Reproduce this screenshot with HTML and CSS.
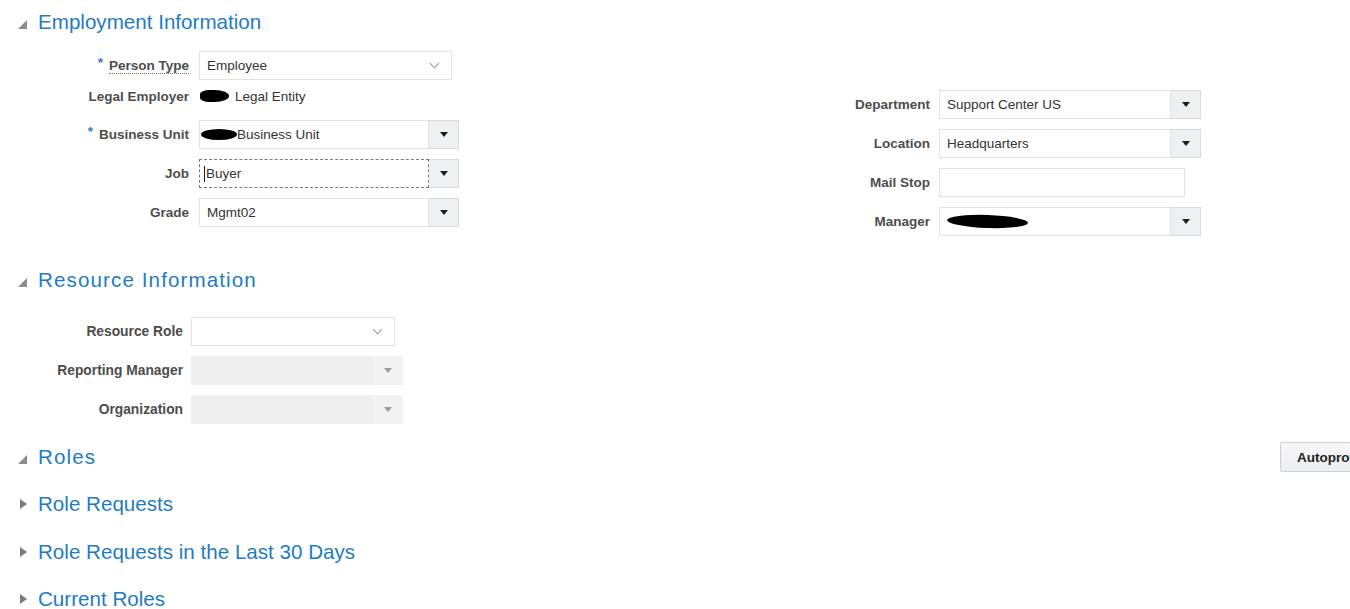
FILE: index.html
```html
<!DOCTYPE html>
<html>

<head>
    <meta charset="UTF-8">
    <title>Employment Information</title>
    <link rel="stylesheet" href="styles.css">
</head>

<body>
    <div class="section-head head-employment">
        <span class="tri-box"><span class="tri-open"></span></span>
        <span class="head-text">Employment Information</span>
    </div>

    <div class="employment">
        <div class="form form-left">
            <div class="row row-person">
                <div class="lbl"><span class="req">*</span><span class="help">Person Type</span></div>
                <div class="select w-person"><span class="val">Employee</span><span class="chev"></span></div>
            </div>
            <div class="row row-text">
                <div class="lbl">Legal Employer</div>
                <div class="ro-value"><span class="blob blob-legal"></span>Legal Entity</div>
            </div>
            <div class="row">
                <div class="lbl"><span class="req">*</span>Business Unit</div>
                <div class="combo">
                    <div class="input w-combo"><span class="blob blob-bu"></span>Business Unit</div>
                    <div class="drop"><span class="arrow"></span></div>
                </div>
            </div>
            <div class="row">
                <div class="lbl">Job</div>
                <div class="combo">
                    <div class="input w-combo focus"><span class="caret"></span>Buyer</div>
                    <div class="drop"><span class="arrow"></span></div>
                </div>
            </div>
            <div class="row">
                <div class="lbl">Grade</div>
                <div class="combo">
                    <div class="input w-combo">Mgmt02</div>
                    <div class="drop"><span class="arrow"></span></div>
                </div>
            </div>
        </div>

        <div class="form form-right">
            <div class="row">
                <div class="lbl">Department</div>
                <div class="combo">
                    <div class="input w-dept">Support Center US</div>
                    <div class="drop"><span class="arrow"></span></div>
                </div>
            </div>
            <div class="row">
                <div class="lbl">Location</div>
                <div class="combo">
                    <div class="input w-dept">Headquarters</div>
                    <div class="drop"><span class="arrow"></span></div>
                </div>
            </div>
            <div class="row">
                <div class="lbl">Mail Stop</div>
                <div class="input w-mail"></div>
            </div>
            <div class="row">
                <div class="lbl">Manager</div>
                <div class="combo">
                    <div class="input w-dept"><span class="blob blob-mgr"></span></div>
                    <div class="drop"><span class="arrow"></span></div>
                </div>
            </div>
        </div>
    </div>

    <div class="section-head head-resource">
        <span class="tri-box"><span class="tri-open"></span></span>
        <span class="head-text wide">Resource Information</span>
    </div>

    <div class="form form-resource">
        <div class="row">
            <div class="lbl">Resource Role</div>
            <div class="select w-role"><span class="chev"></span></div>
        </div>
        <div class="row">
            <div class="lbl">Reporting Manager</div>
            <div class="combo disabled">
                <div class="input w-res"></div>
                <div class="drop"><span class="arrow"></span></div>
            </div>
        </div>
        <div class="row">
            <div class="lbl">Organization</div>
            <div class="combo disabled">
                <div class="input w-res"></div>
                <div class="drop"><span class="arrow"></span></div>
            </div>
        </div>
    </div>

    <div class="section-head head-roles">
        <span class="tri-box"><span class="tri-open"></span></span>
        <span class="head-text wide">Roles</span>
        <button class="btn">Autoprovision</button>
    </div>

    <div class="section-head head-sub">
        <span class="tri-box"><span class="tri-closed"></span></span>
        <span class="head-text">Role Requests</span>
    </div>
    <div class="section-head head-sub head-sub2">
        <span class="tri-box"><span class="tri-closed"></span></span>
        <span class="head-text">Role Requests in the Last 30 Days</span>
    </div>
    <div class="section-head head-sub">
        <span class="tri-box"><span class="tri-closed"></span></span>
        <span class="head-text">Current Roles</span>
    </div>
</body>

</html>
```

FILE: styles.css
```css
html,
body {
    margin: 0;
    background: #fff;
    overflow: hidden;
}

body {
    padding-top: 8px;
    font-family: "Liberation Sans", Arial, sans-serif;
    font-size: 13.5px;
    color: #333;
}

/* section headers */

.section-head {
    display: flex;
    align-items: center;
    height: 28px;
    padding-left: 18px;
}

.tri-box {
    display: flex;
    align-items: center;
    width: 20px;
    height: 28px;
}

.tri-open {
    width: 0;
    height: 0;
    margin-top: 5px;
    border-left: 9px solid transparent;
    border-bottom: 9px solid #8c8c8c;
}

.tri-closed {
    width: 0;
    height: 0;
    margin-left: 2px;
    border-top: 5px solid transparent;
    border-bottom: 5px solid transparent;
    border-left: 7px solid #7b7b7b;
}

.head-text {
    font-size: 20.6px;
    color: #1f7cc2;
}

/* these two headers are drawn a bit wider in the original */
.head-text.wide {
    letter-spacing: 1.1px;
}

.head-resource {
    margin-top: 30px;
}

.head-roles {
    margin-top: 19px;
    width: 1384px;
}

.head-sub {
    margin-top: 19px;
}

.head-sub2 {
    margin-top: 20px;
}

/* buttons */

.btn {
    margin-left: auto;
    height: 30px;
    width: 122px;
    padding: 0 0 0 16px;
    text-align: left;
    border: 1px solid #c9d0d6;
    border-radius: 2px;
    background: linear-gradient(#f6f7f8, #eceef0);
    font-family: "Liberation Sans", Arial, sans-serif;
    font-size: 13.5px;
    font-weight: bold;
    color: #222;
}

/* forms */

.employment {
    display: flex;
    margin-top: 15px;
}

.form-right {
    margin-left: 341px;
    margin-top: 39px;
}

.form-resource {
    margin-top: 23px;
}

.row {
    display: flex;
    align-items: center;
    height: 29px;
    margin-bottom: 10px;
}

.row:last-child {
    margin-bottom: 0;
}

.row-person {
    margin-bottom: 4px;
}

.row-text {
    height: 24px;
    margin-bottom: 12px;
}

.lbl {
    box-sizing: border-box;
    width: 199px;
    padding-right: 10px;
    text-align: right;
    font-weight: bold;
    color: #4d4d4d;
    white-space: nowrap;
}

.form-right .lbl {
    width: 139px;
    padding-right: 9px;
}

.form-resource .lbl {
    width: 191px;
    padding-right: 8px;
    font-size: 13.8px;
}

.req {
    position: relative;
    top: -3px;
    margin-right: 6px;
    color: #2b7cc3;
    font-weight: bold;
}

.help {
    border-bottom: 1px dotted #6d6d6d;
}

.ro-value {
    display: flex;
    align-items: center;
    padding-left: 1px;
}

/* inputs */

.select,
.input {
    box-sizing: border-box;
    display: flex;
    align-items: center;
    height: 29px;
    padding-left: 7px;
    border: 1px solid #dfe3e6;
    background: #fff;
    color: #333;
    position: relative;
}

.input.focus {
    border: 1px dashed #7a7a7a;
    padding-left: 4px;
}

.w-person {
    width: 253px;
}

.w-combo {
    width: 230px;
}

.w-dept {
    width: 232px;
}

.w-mail {
    width: 246px;
}

.w-role {
    width: 204px;
}

.w-res {
    width: 182px;
}

.chev {
    position: absolute;
    right: 13px;
    top: 8px;
    width: 6px;
    height: 6px;
    border-right: 1px solid #9a9a9a;
    border-bottom: 1px solid #9a9a9a;
    transform: rotate(45deg);
}

.combo {
    display: flex;
}

.drop {
    box-sizing: border-box;
    display: flex;
    align-items: center;
    justify-content: center;
    width: 31px;
    height: 29px;
    margin-left: -1px;
    border: 1px solid #d6dbdf;
    background: #eff0f1;
}

.arrow {
    width: 0;
    height: 0;
    border-left: 4px solid transparent;
    border-right: 4px solid transparent;
    border-top: 5px solid #1e1e1e;
}

.disabled .input {
    border-color: #efefef;
    background: #efefef;
}

.disabled .drop {
    width: 31px;
    border-color: #f3f3f3;
    background: #f2f2f2;
}

.disabled .arrow {
    border-top-color: #9c9c9c;
}

.caret {
    width: 1px;
    height: 16px;
    margin-right: 1px;
    background: #222;
}

/* redacted spots */

.blob {
    display: inline-block;
    background: #000;
    border-radius: 50%;
}

.blob-legal {
    width: 29px;
    height: 12px;
    margin-right: 6px;
    border-radius: 40% 60% 60% 40%;
}

.blob-bu {
    width: 36px;
    height: 11px;
    margin-left: -6px;
}

.blob-mgr {
    width: 81px;
    height: 13px;
    transform: rotate(2deg);
}
```
